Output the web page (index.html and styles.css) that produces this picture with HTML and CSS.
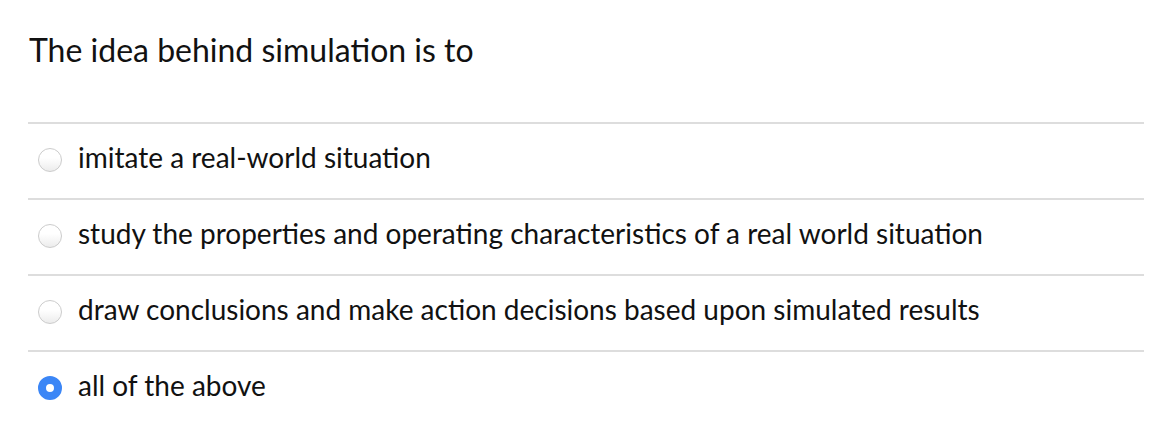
FILE: index.html
```html
<!DOCTYPE html>
<html>
<head>
<meta charset="utf-8">
<link rel="stylesheet" href="styles.css">
</head>
<body>
<div class="question">
  <h1 class="prompt">The idea behind simulation is to</h1>
  <ul class="options">
    <li class="option"><span class="radio"></span><span class="label">imitate a real-world situation</span></li>
    <li class="option"><span class="radio"></span><span class="label">study the properties and operating characteristics of a real world situation</span></li>
    <li class="option"><span class="radio"></span><span class="label">draw conclusions and make action decisions based upon simulated results</span></li>
    <li class="option"><span class="radio checked"></span><span class="label">all of the above</span></li>
  </ul>
</div>
</body>
</html>
```
FILE: styles.css
```css
html, body {
  margin: 0;
  padding: 0;
  background: #ffffff;
}
body {
  font-family: Lato, "Liberation Sans", sans-serif;
  color: #111111;
}
.question {
  padding: 31px 20px 0 28px;
}
.prompt {
  margin: 0;
  font-size: 32px;
  font-weight: 400;
  line-height: 38px;
  padding-left: 1px;
}
.options {
  list-style: none;
  margin: 53px 0 0 0;
  padding: 0;
}
.option {
  display: flex;
  align-items: center;
  gap: 16px;
  height: 74px;
  box-sizing: content-box;
  border-top: 2px solid #dddddd;
  padding-left: 10px;
  font-size: 28px;
}
.option {
  height: 66px;
  padding-bottom: 8px;
}
.radio {
  flex: none;
  width: 24px;
  height: 24px;
  box-sizing: border-box;
  border-radius: 50%;
  border: 1px solid #cccccc;
  background: linear-gradient(#ffffff 40%, #ececec);
  margin-top: 6px;
}
.radio.checked {
  border: 8px solid #3b86f6;
  background: #ffffff;
}
.label {
  line-height: 32px;
}
```
